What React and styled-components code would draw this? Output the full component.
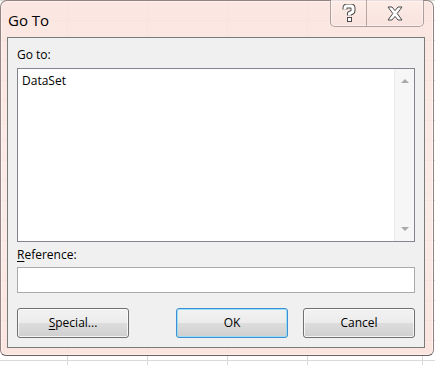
import React from "react";
import styled, { createGlobalStyle } from "styled-components";

const Global = createGlobalStyle`
  html, body { margin: 0; padding: 0; background: #ffffff; }
  * { box-sizing: border-box; }
`;

const Desktop = styled.div`
  width: 435px;
  height: 365px;
  overflow: hidden;
  background-color: #ffffff;
  background-image:
    repeating-linear-gradient(to right, transparent 0, transparent 67px, #d9d9d9 67px, #d9d9d9 68px, transparent 68px, transparent 80px),
    repeating-linear-gradient(to bottom, #d9d9d9 0, #d9d9d9 1px, transparent 1px, transparent 20px);
  background-position: -80px 0, 0 0;
  font-family: "Open Sans", "Noto Sans", sans-serif;
  color: #000;
`;

const Window = styled.div`
  width: 434px;
  height: 356px;
  border: 1px solid rgba(80, 65, 65, 0.6);
  border-bottom-color: rgba(60, 50, 50, 0.75);
  border-radius: 7px 7px 6px 6px;
  background: linear-gradient(to bottom, rgba(251, 228, 222, 0.9), rgba(250, 232, 228, 0.88) 60%, rgba(250, 226, 220, 0.9));
  box-shadow: inset 0 0 0 1px rgba(255, 255, 255, 0.55);
  display: flex;
  flex-direction: column;
  padding: 0 8px 6px 6px;
`;

const TitleBar = styled.div`
  height: 36px;
  display: flex;
  align-items: flex-start;
  justify-content: space-between;
`;

const Title = styled.div`
  font-size: 15px;
  line-height: 20px;
  margin-top: 9px;
  margin-left: 1px;
  color: #000;
`;

const Caption = styled.div`
  display: flex;
  margin-top: -1px;
  margin-right: 1px;
  height: 27px;
  border: 1px solid rgba(80, 70, 70, 0.45);
  border-top: none;
  border-radius: 0 0 5px 5px;
  background: linear-gradient(to bottom, rgba(255, 240, 236, 0.6), rgba(248, 224, 218, 0.6));
  box-shadow: inset 0 0 0 1px rgba(255, 255, 255, 0.45);
`;

const CaptionButton = styled.div`
  width: ${(p) => p.$w}px;
  display: flex;
  align-items: center;
  justify-content: center;
  & + & {
    border-left: 1px solid rgba(80, 70, 70, 0.4);
  }
`;

const Panel = styled.div`
  height: 311px;
  background: #f0f0f0;
  border: 1px solid #7a7a7a;
  padding: 9px 9px 0 9px;
  display: flex;
  flex-direction: column;
`;

const Label = styled.div`
  font-size: 12px;
  line-height: 16px;
  height: 16px;
  margin-top: ${(p) => p.$mt || 0}px;
`;

const Key = styled.span`
  text-decoration: underline;
  text-underline-offset: 2px;
`;

const ListBox = styled.div`
  margin-top: 5px;
  height: 174px;
  border: 1px solid #82858d;
  background: #ffffff;
  display: flex;
`;

const ListItems = styled.div`
  flex: 1;
  padding: 4px 4px;
  font-size: 12px;
  line-height: 16px;
`;

const ScrollBar = styled.div`
  width: 20px;
  background: #f6f6f6;
  border-left: 1px solid #ebebeb;
  display: flex;
  flex-direction: column;
  justify-content: space-between;
  align-items: center;
  padding: 10px 0 10px;
`;

const Arrow = styled.div`
  width: 0;
  height: 0;
  border-left: 4px solid transparent;
  border-right: 4px solid transparent;
  ${(p) =>
    p.$down
      ? "border-top: 4px solid #a9a9a9;"
      : "border-bottom: 4px solid #a9a9a9;"}
`;

const TextInput = styled.div`
  margin-top: 4px;
  height: 26px;
  border: 1px solid #aaaaaa;
  background: #ffffff;
`;

const ButtonRow = styled.div`
  margin-top: 15px;
  display: flex;
  justify-content: space-between;
`;

const ButtonGroup = styled.div`
  display: flex;
  gap: 15px;
`;

const Button = styled.div`
  width: 112px;
  height: 30px;
  border: 1px solid ${(p) => (p.$default ? "#3c8fd0" : "#707070")};
  border-radius: 3px;
  background: linear-gradient(to bottom, #f2f2f2 0%, #ebebeb 50%, #dddddd 50%, #cfcfcf 100%);
  box-shadow: inset 0 0 0 1px ${(p) => (p.$default ? "rgba(150, 220, 250, 0.95)" : "rgba(252, 252, 252, 0.8)")};
  display: flex;
  align-items: center;
  justify-content: center;
  font-size: 12px;
  line-height: 16px;
  color: #000;
`;

function HelpIcon() {
  return (
    <svg width="14" height="19" viewBox="0 0 14 19">
      <path
        d="M3 5.5 V4 Q3 2 5 2 H9 Q11 2 11 4 V6.5 Q11 8 9.5 8.6 L7.5 9.4 V11.5"
        fill="none"
        stroke="#4a4a4a"
        strokeWidth="5"
        strokeLinejoin="round"
      />
      <path
        d="M3 5.5 V4 Q3 2 5 2 H9 Q11 2 11 4 V6.5 Q11 8 9.5 8.6 L7.5 9.4 V11.5"
        fill="none"
        stroke="#ffffff"
        strokeWidth="3"
        strokeLinejoin="round"
      />
      <rect x="5.5" y="13.5" width="4" height="4" fill="#ffffff" stroke="#4a4a4a" strokeWidth="1" />
    </svg>
  );
}

function CloseIcon() {
  return (
    <svg width="16" height="15" viewBox="0 0 16 15">
      <path
        d="M1 1 H5 L8 4.6 L11 1 H15 L10.2 7.5 L15 14 H11 L8 10.4 L5 14 H1 L5.8 7.5 Z"
        fill="#ffffff"
        stroke="#4a4a4a"
        strokeWidth="1"
        strokeLinejoin="round"
      />
    </svg>
  );
}

export default function App() {
  return (
    <>
      <Global />
      <Desktop>
        <Window>
          <TitleBar>
            <Title>Go To</Title>
            <Caption>
              <CaptionButton $w={35}>
                <HelpIcon />
              </CaptionButton>
              <CaptionButton $w={57}>
                <CloseIcon />
              </CaptionButton>
            </Caption>
          </TitleBar>
          <Panel>
            <Label>Go to:</Label>
            <ListBox>
              <ListItems>DataSet</ListItems>
              <ScrollBar>
                <Arrow />
                <Arrow $down />
              </ScrollBar>
            </ListBox>
            <Label $mt={5}>
              <Key>R</Key>eference:
            </Label>
            <TextInput />
            <ButtonRow>
              <Button>
                <span>
                  <Key>S</Key>pecial...
                </span>
              </Button>
              <ButtonGroup>
                <Button $default>OK</Button>
                <Button>Cancel</Button>
              </ButtonGroup>
            </ButtonRow>
          </Panel>
        </Window>
      </Desktop>
    </>
  );
}
